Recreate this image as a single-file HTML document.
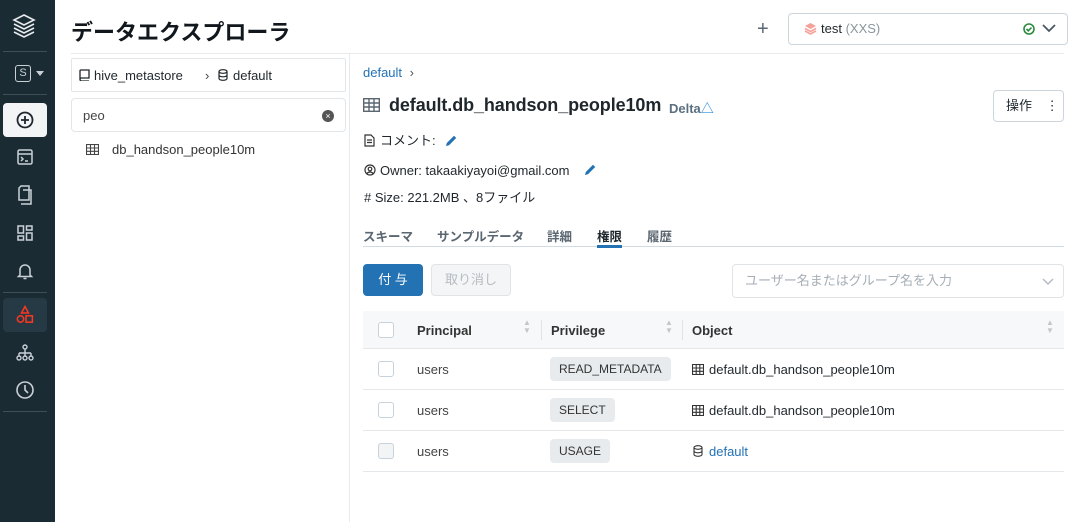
<!DOCTYPE html>
<html><head><meta charset="utf-8"><style>
*{box-sizing:border-box;margin:0;padding:0}
body{width:1080px;height:522px;overflow:hidden;background:#fff;font-family:"Liberation Sans","Noto Sans CJK JP",sans-serif;color:#1f272d;font-size:13px;position:relative}
.abs{position:absolute}
.sb{left:0;top:0;width:55px;height:522px;background:#1b2b34}
.sb .ic{position:absolute;left:3px;width:44px;height:34px;border-radius:4px;display:flex;align-items:center;justify-content:center}
.sep{position:absolute;left:3px;width:44px;height:1px;background:#3d4f58}
.cb{width:16px;height:16px;border:1px solid #c8d2da;border-radius:3px;position:absolute;left:378px;background:#fff}
.tag{position:absolute;background:#e8ebee;border-radius:4px;padding:0 9px;height:24px;line-height:24px;font-size:12px;color:#333}
.row{position:absolute;left:363px;width:701px;border-bottom:1px solid #e4e8eb}
.t{position:absolute;font-size:13px;white-space:nowrap}
.tab{position:absolute;top:226px;font-size:12.5px;font-weight:bold;color:#5a6670;white-space:nowrap}
</style></head><body>
<div class="abs sb">
 <svg class="abs" style="left:12px;top:13px" width="24" height="26" viewBox="0 0 24 26" fill="none" stroke="#e8ecef" stroke-width="1.6"><path d="M12 2L22 7 12 12 2 7Z"/><path d="M2 11l10 5 10-5"/><path d="M2 15l10 5 10-5"/><path d="M2 19l10 5 10-5"/></svg>
 <div class="sep" style="top:51px"></div>
 <div class="abs" style="left:15px;top:65px;width:16px;height:17px;border:1.5px solid #c9d1d6;border-radius:3px;color:#c9d1d6;font-size:11px;text-align:center;line-height:14px">S</div>
 <div class="abs" style="left:36px;top:71px;border:4px solid transparent;border-top:5px solid #c9d1d6"></div>
 <div class="sep" style="top:94px"></div>
 <div class="ic" style="top:103px;background:#f2f4f5"><svg width="18" height="18" viewBox="0 0 18 18" fill="none" stroke="#1f272d" stroke-width="1.8"><circle cx="9" cy="9" r="7.5"/><path d="M9 5v8M5 9h8"/></svg></div>
 <div class="ic" style="top:140px"><svg width="18" height="18" viewBox="0 0 18 18" fill="none" stroke="#c9d1d6" stroke-width="1.5"><rect x="2" y="2" width="14" height="14" rx="1.5"/><path d="M2 6h14M5 9l2 2-2 2M9 13h3"/></svg></div>
 <div class="ic" style="top:178px"><svg width="18" height="20" viewBox="0 0 18 20" fill="none" stroke="#c9d1d6" stroke-width="1.5"><path d="M5 1h8v14H3V3zM7 5h8v14H5"/></svg></div>
 <div class="ic" style="top:216px"><svg width="18" height="18" viewBox="0 0 18 18" fill="none" stroke="#c9d1d6" stroke-width="1.5"><rect x="2" y="2" width="5.5" height="7"/><rect x="10.5" y="2" width="5.5" height="4"/><rect x="2" y="12" width="5.5" height="4"/><rect x="10.5" y="9" width="5.5" height="7"/></svg></div>
 <div class="ic" style="top:254px"><svg width="18" height="18" viewBox="0 0 18 18" fill="none" stroke="#c9d1d6" stroke-width="1.5"><path d="M4 13V8a5 5 0 0110 0v5l1.5 1.5h-13zM7.5 16.5h3"/></svg></div>
 <div class="sep" style="top:292px"></div>
 <div class="ic" style="top:298px;background:#253a44"><svg width="18" height="20" viewBox="0 0 18 20" fill="none" stroke="#ff3621" stroke-width="1.5"><path d="M9 1.5L12.5 8h-7z"/><circle cx="4.5" cy="14" r="3.2"/><rect x="10" y="10.8" width="6.4" height="6.4"/></svg></div>
 <div class="ic" style="top:336px"><svg width="20" height="18" viewBox="0 0 20 18" fill="none" stroke="#c9d1d6" stroke-width="1.4"><circle cx="10" cy="3" r="2"/><path d="M10 5v4M4 9h12M4 9v3M10 9v3M16 9v3"/><circle cx="4" cy="14" r="2"/><circle cx="10" cy="14" r="2"/><circle cx="16" cy="14" r="2"/></svg></div>
 <div class="ic" style="top:373px"><svg width="20" height="20" viewBox="0 0 20 20" fill="none" stroke="#c9d1d6" stroke-width="1.6"><circle cx="10" cy="10" r="8"/><path d="M10 5v5l3 3"/></svg></div>
 <div class="sep" style="top:411px"></div>
</div>

<div class="t" style="left:71px;top:15px;font-size:22px;font-weight:bold;color:#11171c">データエクスプローラ</div>
<div class="t" style="left:757px;top:18px;font-size:20px;color:#5a6670">+</div>
<div class="abs" style="left:788px;top:13px;width:280px;height:32px;border:1px solid #cdd6dd;border-radius:4px"></div>
<svg class="abs" style="left:804px;top:22px" width="13" height="13" viewBox="0 0 13 13"><path d="M6.5 1L12 4 6.5 7 1 4Z" fill="#f5a09a"/><path d="M1 6.5l5.5 3 5.5-3M1 9l5.5 3 5.5-3" stroke="#f5a09a" stroke-width="1.6" fill="none"/></svg>
<div class="t" style="left:821px;top:21px;color:#1f272d">test <span style="color:#8b959d">(XXS)</span></div>
<svg class="abs" style="left:1023px;top:23px" width="12" height="12" viewBox="0 0 12 12" fill="none" stroke="#2a8a3e" stroke-width="1.6"><circle cx="6" cy="6" r="5"/><path d="M3.5 6l1.8 1.8L8.5 4.5"/></svg>
<svg class="abs" style="left:1042px;top:24px" width="14" height="9" viewBox="0 0 14 9" fill="none" stroke="#4a5862" stroke-width="1.8"><path d="M1 1l6 6 6-6"/></svg>
<div class="abs" style="left:71px;top:53px;width:993px;height:1px;background:#e8ebee"></div>
<div class="abs" style="left:349px;top:54px;width:1px;height:468px;background:#e8ebee"></div>

<div class="abs" style="left:71px;top:58px;width:275px;height:34px;border:1px solid #e2e6e9;border-radius:2px"></div>
<svg class="abs" style="left:79px;top:69px" width="11" height="12" viewBox="0 0 11 12" fill="none" stroke="#1f272d" stroke-width="1.3"><path d="M2 1h8v8H2.5A1.5 1.5 0 001 10.5V2A1 1 0 012 1zM1 10.5A1.5 1.5 0 002.5 12H10"/></svg>
<div class="t" style="left:94px;top:68px">hive_metastore</div>
<div class="t" style="left:205px;top:68px;color:#444">›</div>
<svg class="abs" style="left:218px;top:69px" width="10" height="12" viewBox="0 0 10 12" fill="none" stroke="#1f272d" stroke-width="1.2"><ellipse cx="5" cy="2.5" rx="4" ry="1.8"/><path d="M1 2.5v7c0 1 1.8 1.8 4 1.8s4-.8 4-1.8v-7M1 6c0 1 1.8 1.8 4 1.8S9 7 9 6"/></svg>
<div class="t" style="left:233px;top:68px">default</div>
<div class="abs" style="left:71px;top:98px;width:275px;height:34px;border:1px solid #e2e6e9;border-radius:4px"></div>
<div class="t" style="left:83px;top:108px;color:#444">peo</div>
<div class="abs" style="left:322px;top:110px;width:12px;height:12px;border-radius:50%;background:#555;color:#fff;font-size:9px;line-height:12px;text-align:center">×</div>
<svg class="abs" style="left:86px;top:144px" width="13" height="11" viewBox="0 0 13 11" fill="none" stroke="#444" stroke-width="1.1"><rect x=".5" y=".5" width="12" height="10"/><path d="M.5 4h12M.5 7.3h12M4.5 .5v10M8.5 .5v10"/></svg>
<div class="t" style="left:112px;top:142px;color:#333">db_handson_people10m</div>

<div class="t" style="left:363px;top:65px;color:#2272b4">default <span style="color:#555;margin-left:4px">›</span></div>
<svg class="abs" style="left:363px;top:98px" width="17" height="14" viewBox="0 0 17 14" fill="none" stroke="#5a6670" stroke-width="1.4"><rect x=".7" y=".7" width="15.6" height="12.6"/><path d="M.7 5h15.6M.7 9h15.6M6 .7v12.6M11 .7v12.6"/></svg>
<div class="t" style="left:389px;top:95px;font-size:18px;font-weight:bold;color:#1f272d;letter-spacing:-0.1px">default.db_handson_people10m</div>
<div class="t" style="left:669px;top:98px;font-size:13px;font-weight:bold;color:#5a6f80">Delta<span style="color:#2a8ee0">△</span></div>
<div class="abs" style="left:993px;top:90px;width:71px;height:32px;border:1px solid #cdd6dd;border-radius:4px"></div>
<div class="t" style="left:1006px;top:98px;line-height:16px">操作 <span style="margin-left:10px">⋮</span></div>

<svg class="abs" style="left:364px;top:134px" width="11" height="13" viewBox="0 0 11 13" fill="none" stroke="#333" stroke-width="1.2"><path d="M1 1h6l3 3v8H1zM3 6h5M3 8.5h5"/></svg>
<div class="t" style="left:380px;top:134px;line-height:14px">コメント:</div>
<svg class="abs" style="left:445px;top:134px" width="13" height="13" viewBox="0 0 13 13"><path d="M1 12l.8-3L9 1.8l2.2 2.2L4 11.2z" fill="#2272b4"/></svg>
<svg class="abs" style="left:364px;top:164px" width="12" height="12" viewBox="0 0 12 12" fill="none" stroke="#333" stroke-width="1.2"><circle cx="6" cy="6" r="5"/><circle cx="6" cy="5" r="1.8"/><path d="M3 9.5c1.5-2 4.5-2 6 0"/></svg>
<div class="t" style="left:380px;top:163px">Owner: takaakiyayoi@gmail.com</div>
<svg class="abs" style="left:584px;top:163px" width="13" height="13" viewBox="0 0 13 13"><path d="M1 12l.8-3L9 1.8l2.2 2.2L4 11.2z" fill="#2272b4"/></svg>
<div class="t" style="left:364px;top:191px;line-height:14px">#&nbsp;Size: 221.2MB 、8ファイル</div>

<div class="tab" style="left:363px">スキーマ</div>
<div class="tab" style="left:437px">サンプルデータ</div>
<div class="tab" style="left:547px">詳細</div>
<div class="tab" style="left:597px;color:#1f272d">権限</div>
<div class="tab" style="left:647px">履歴</div>
<div class="abs" style="left:363px;top:246px;width:701px;height:1px;background:#d1dbe3"></div>
<div class="abs" style="left:597px;top:245px;width:25px;height:3px;background:#2272b4"></div>

<div class="abs" style="left:363px;top:264px;width:60px;height:32px;background:#2272b4;border-radius:4px;color:#fff;text-align:center;line-height:32px">付 与</div>
<div class="abs" style="left:431px;top:264px;width:80px;height:32px;background:#f4f5f6;border:1px solid #e0e4e7;border-radius:4px;color:#b5bcc2;text-align:center;line-height:30px">取り消し</div>
<div class="abs" style="left:732px;top:264px;width:332px;height:34px;border:1px solid #e0e4e7;border-radius:4px"></div>
<div class="t" style="left:745px;top:273px;color:#a6aeb5;line-height:16px">ユーザー名またはグループ名を入力</div>
<svg class="abs" style="left:1042px;top:278px" width="12" height="8" viewBox="0 0 12 8" fill="none" stroke="#b5bcc2" stroke-width="1.5"><path d="M1 1l5 5 5-5"/></svg>

<div class="row" style="top:311px;height:38px;background:#f7f8f9"></div>
<div class="cb" style="top:322px"></div>
<div class="t" style="left:417px;top:323px;font-weight:bold;color:#333">Principal</div>
<div class="t" style="left:523px;top:319px;font-size:8px;color:#c0c7cd;line-height:8px">▲<br>▼</div>
<div class="abs" style="left:541px;top:320px;width:1px;height:20px;background:#e0e4e7"></div>
<div class="t" style="left:551px;top:323px;font-weight:bold;color:#333">Privilege</div>
<div class="t" style="left:665px;top:319px;font-size:8px;color:#c0c7cd;line-height:8px">▲<br>▼</div>
<div class="abs" style="left:682px;top:320px;width:1px;height:20px;background:#e0e4e7"></div>
<div class="t" style="left:692px;top:323px;font-weight:bold;color:#333">Object</div>
<div class="t" style="left:1046px;top:319px;font-size:8px;color:#c0c7cd;line-height:8px">▲<br>▼</div>

<div class="row" style="top:349px;height:41px"></div>
<div class="cb" style="top:361px"></div>
<div class="t" style="left:417px;top:362px;color:#444">users</div>
<div class="tag" style="left:550px;top:357px">READ_METADATA</div>
<svg class="abs" style="left:692px;top:364px" width="12" height="11" viewBox="0 0 12 11" fill="none" stroke="#333" stroke-width="1.1"><rect x=".5" y=".5" width="11" height="10"/><path d="M.5 4h11M.5 7.3h11M4.2 .5v10M7.8 .5v10"/></svg>
<div class="t" style="left:709px;top:362px">default.db_handson_people10m</div>

<div class="row" style="top:390px;height:41px"></div>
<div class="cb" style="top:402px"></div>
<div class="t" style="left:417px;top:403px;color:#444">users</div>
<div class="tag" style="left:550px;top:398px">SELECT</div>
<svg class="abs" style="left:692px;top:405px" width="12" height="11" viewBox="0 0 12 11" fill="none" stroke="#333" stroke-width="1.1"><rect x=".5" y=".5" width="11" height="10"/><path d="M.5 4h11M.5 7.3h11M4.2 .5v10M7.8 .5v10"/></svg>
<div class="t" style="left:709px;top:403px">default.db_handson_people10m</div>

<div class="row" style="top:431px;height:41px"></div>
<div class="cb" style="top:443px;background:#f2f4f5"></div>
<div class="t" style="left:417px;top:444px;color:#444">users</div>
<div class="tag" style="left:550px;top:439px">USAGE</div>
<svg class="abs" style="left:693px;top:445px" width="10" height="12" viewBox="0 0 10 12" fill="none" stroke="#333" stroke-width="1.1"><ellipse cx="5" cy="2.5" rx="4" ry="1.8"/><path d="M1 2.5v7c0 1 1.8 1.8 4 1.8s4-.8 4-1.8v-7M1 6c0 1 1.8 1.8 4 1.8S9 7 9 6"/></svg>
<div class="t" style="left:709px;top:444px;color:#2272b4">default</div>
</body></html>
